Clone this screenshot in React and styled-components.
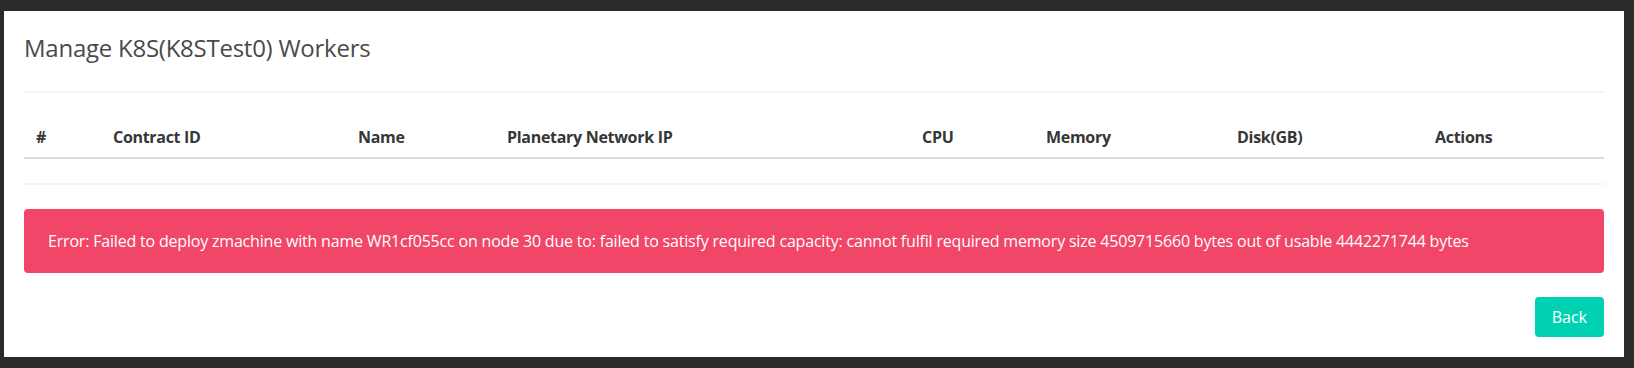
import React from "react";
import styled, { createGlobalStyle } from "styled-components";

const GlobalStyle = createGlobalStyle`
  html, body {
    margin: 0;
    padding: 0;
    background: #2b2b2b;
  }
  body {
    font-family: "Open Sans", "Noto Sans", sans-serif;
    color: #4a4a4a;
    font-size: 16px;
  }
  * { box-sizing: border-box; }
`;

const Frame = styled.div`
  padding: 11px 10px 11px 4px;
  min-height: 368px;
`;

const Card = styled.section`
  background: #ffffff;
  padding: 23px 20px 20px 20px;
  display: flex;
  flex-direction: column;
`;

const Title = styled.h1`
  margin: 0;
  font-size: 24px;
  line-height: 27px;
  font-weight: 400;
  color: #4a4a4a;
  letter-spacing: -0.25px;
`;

const Divider = styled.hr`
  border: none;
  height: 2px;
  background: #f5f5f5;
  margin: ${(p) => p.$top}px 0 24px 0;
`;

const Table = styled.table`
  width: 100%;
  table-layout: fixed;
  border-collapse: collapse;
  border-spacing: 0;
`;

const HeadCell = styled.th`
  text-align: left;
  padding: 8px 12px;
  line-height: 24px;
  font-size: 16px;
  font-weight: 700;
  color: #363636;
  letter-spacing: -0.3px;
  white-space: nowrap;
  border-bottom: 2px solid #dbdbdb;
`;

const Notification = styled.div`
  background: #f14668;
  color: #ffffff;
  border-radius: 4px;
  padding: 20px 40px 20px 24px;
  font-size: 16px;
  line-height: 24px;
  letter-spacing: -0.19px;
  white-space: nowrap;
`;

const Footer = styled.div`
  display: flex;
  justify-content: flex-end;
  margin-top: 24px;
`;

const Button = styled.button`
  height: 40px;
  padding: 0 16px;
  border: 1px solid transparent;
  border-radius: 4px;
  background: #00d1b2;
  color: #ffffff;
  font-family: inherit;
  font-size: 16px;
  cursor: pointer;
`;

const columns = [
  { label: "#", width: 77 },
  { label: "Contract ID", width: 245 },
  { label: "Name", width: 149 },
  { label: "Planetary Network IP", width: 415 },
  { label: "CPU", width: 124 },
  { label: "Memory", width: 191 },
  { label: "Disk(GB)", width: 198 },
  { label: "Actions", width: 181 },
];

const Col = styled.col`
  width: ${(p) => p.$w}px;
`;

export default function App() {
  return (
    <>
      <GlobalStyle />
      <Frame>
        <Card>
          <Title>Manage K8S(K8STest0) Workers</Title>
          <Divider $top={30} />
          <Table>
            <colgroup>
              {columns.map((c) => (
                <Col key={c.label} $w={c.width} />
              ))}
            </colgroup>
            <thead>
              <tr>
                {columns.map((c) => (
                  <HeadCell key={c.label}>{c.label}</HeadCell>
                ))}
              </tr>
            </thead>
            <tbody />
          </Table>
          <Divider $top={24} />
          <Notification>
            Error: Failed to deploy zmachine with name WR1cf055cc on node 30 due to: failed to satisfy required capacity: cannot fulfil required memory size 4509715660 bytes out of usable 4442271744 bytes
          </Notification>
          <Footer>
            <Button>Back</Button>
          </Footer>
        </Card>
      </Frame>
    </>
  );
}
